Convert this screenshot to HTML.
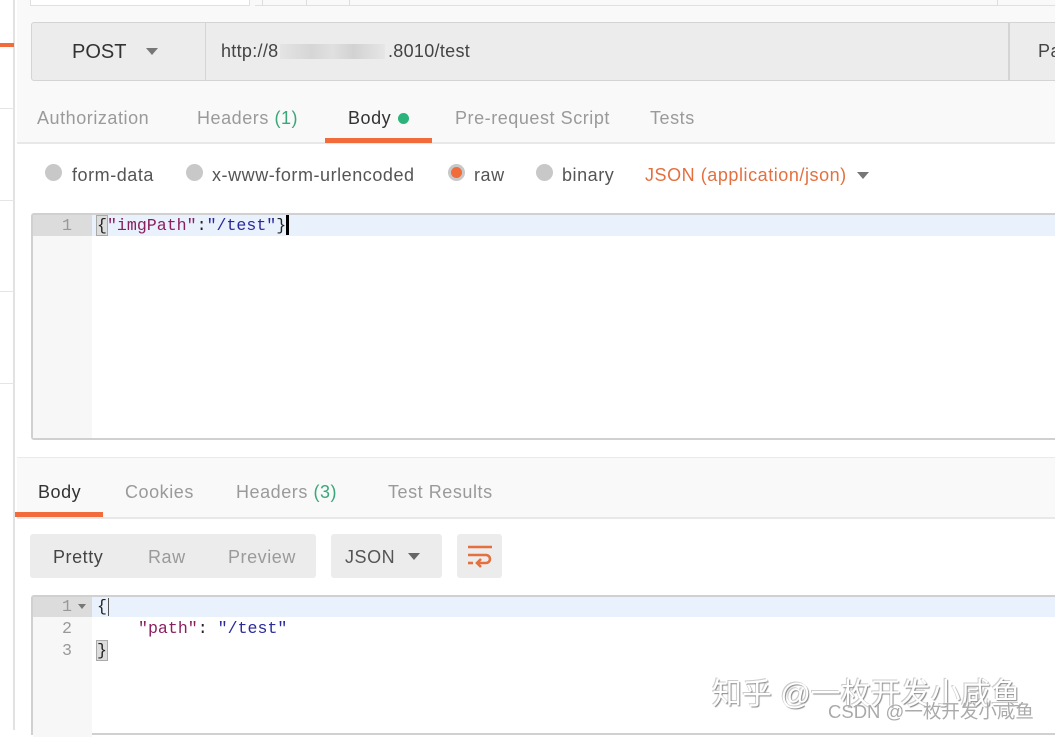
<!DOCTYPE html>
<html><head><meta charset="utf-8"><style>
*{margin:0;padding:0;box-sizing:border-box}
body{width:1055px;height:730px;overflow:hidden;background:#fff;font-family:"Liberation Sans","Noto Sans CJK SC",sans-serif;position:relative;font-size:18px;letter-spacing:0.55px}
.a{position:absolute}
.mono{font-family:"Liberation Mono","DejaVu Sans Mono",monospace;font-size:16.6px;letter-spacing:0}
.g{color:#9a9a9a}
.gr{color:#3aa77a}
.dot{position:absolute;width:17px;height:17px;border-radius:50%;background:#c8c8c8}
</style></head><body>
<div class="a" style="left:0;top:0;width:15px;height:730px;background:#fff;border-right:2px solid #e2e2e2"></div>
<div class="a" style="left:0;top:43px;width:14px;height:4px;background:#f26b3a"></div>
<div class="a" style="left:0;top:108px;width:14px;height:1px;background:#e5e5e5"></div>
<div class="a" style="left:0;top:200px;width:14px;height:1px;background:#e5e5e5"></div>
<div class="a" style="left:0;top:291px;width:14px;height:1px;background:#e5e5e5"></div>
<div class="a" style="left:0;top:383px;width:14px;height:1px;background:#e5e5e5"></div>
<div class="a" style="left:17px;top:0;width:1038px;height:22px;background:#f9f9f9"></div>
<div class="a" style="left:30px;top:0;width:220px;height:6px;background:#fff;border:1px solid #e0e0e0;border-top:none"></div>
<div class="a" style="left:255px;top:0;width:800px;height:6px;border-bottom:1px solid #e0e0e0"></div>
<div class="a" style="left:262px;top:0;width:1px;height:6px;background:#ddd"></div>
<div class="a" style="left:306px;top:0;width:1px;height:6px;background:#ddd"></div>
<div class="a" style="left:349px;top:0;width:1px;height:6px;background:#ddd"></div>
<div class="a" style="left:997px;top:0;width:1px;height:6px;background:#ddd"></div>
<div class="a" style="left:17px;top:6px;width:1038px;height:75px;background:#f9f9f9"></div>
<div class="a" style="left:31px;top:22px;width:1030px;height:59px;background:#ececec;border:1px solid #d4d4d4;border-radius:3px"></div>
<div class="a" style="left:205px;top:23px;width:1px;height:57px;background:#d4d4d4"></div>
<div class="a" style="left:1008px;top:23px;width:2px;height:57px;background:#d4d4d4"></div>
<div class="a" style="left:72px;top:41px;font-size:20px;color:#333;letter-spacing:0">POST</div>
<div class="a" style="left:146px;top:48px;width:0;height:0;border-left:6px solid transparent;border-right:6px solid transparent;border-top:7px solid #777"></div>
<div class="a" style="left:221px;top:41px;font-size:18px;color:#444;letter-spacing:0.3px">http://8</div>
<div class="a" style="left:280px;top:44px;width:105px;height:15px;background:linear-gradient(90deg,#e4e4e4,#d6d6d6 30%,#e0e0e0 50%,#d2d2d2 70%,#e6e6e6)"></div>
<div class="a" style="left:388px;top:41px;font-size:18px;color:#444;letter-spacing:0.3px">.8010/test</div>
<div class="a" style="left:1038px;top:41px;font-size:18px;color:#444">Pa</div>
<div class="a" style="left:17px;top:81px;width:1038px;height:63px;background:#f9f9f9;border-bottom:2px solid #e8e8e8"></div>
<div class="a g" style="left:37px;top:108px">Authorization</div>
<div class="a g" style="left:197px;top:108px">Headers <span class="gr">(1)</span></div>
<div class="a" style="left:348px;top:108px;color:#333">Body</div>
<div class="a" style="left:398px;top:113px;width:11px;height:11px;border-radius:50%;background:#2bb37b"></div>
<div class="a g" style="left:455px;top:108px">Pre-request Script</div>
<div class="a g" style="left:650px;top:108px">Tests</div>
<div class="a" style="left:325px;top:138px;width:107px;height:5px;background:#f26b3a"></div>
<div class="dot" style="left:45px;top:164px"></div>
<div class="a" style="left:72px;top:165px;color:#555">form-data</div>
<div class="dot" style="left:186px;top:164px"></div>
<div class="a" style="left:212px;top:165px;color:#555">x-www-form-urlencoded</div>
<div class="dot" style="left:448px;top:164px;background:#f26b3a;border:3px solid #c8c8c8"></div>
<div class="a" style="left:474px;top:165px;color:#555">raw</div>
<div class="dot" style="left:536px;top:164px"></div>
<div class="a" style="left:562px;top:165px;color:#555">binary</div>
<div class="a" style="left:645px;top:165px;color:#e4703f">JSON (application/json)</div>
<div class="a" style="left:857px;top:172px;width:0;height:0;border-left:6px solid transparent;border-right:6px solid transparent;border-top:7px solid #777"></div>
<div class="a" style="left:31px;top:213px;width:1030px;height:227px;border:2px solid #d0d0d0;border-right:none;border-radius:3px 0 0 3px;background:#fff"></div>
<div class="a" style="left:33px;top:215px;width:59px;height:223px;background:#f7f7f7"></div>
<div class="a" style="left:33px;top:215px;width:59px;height:21px;background:#dcdcdc"></div>
<div class="a" style="left:92px;top:215px;width:963px;height:21px;background:#e8f1fc"></div>
<div class="a mono" style="left:62px;top:216px;color:#999">1</div>
<div class="a mono" style="left:97px;top:216px;color:#222"><span style="outline:1px solid #aaa;background:#ddd">{</span><span style="color:#8a1f5f">"imgPath"</span>:<span style="color:#2a2a9a">"/test"</span>}</div>
<div class="a" style="left:286px;top:215px;width:3px;height:20px;background:#000"></div>
<div class="a" style="left:17px;top:457px;width:1038px;height:62px;background:#f9f9f9;border-top:1px solid #eaeaea;border-bottom:2px solid #e8e8e8"></div>
<div class="a" style="left:38px;top:482px;color:#333">Body</div>
<div class="a g" style="left:125px;top:482px">Cookies</div>
<div class="a g" style="left:236px;top:482px">Headers <span class="gr">(3)</span></div>
<div class="a g" style="left:388px;top:482px">Test Results</div>
<div class="a" style="left:15px;top:512px;width:88px;height:5px;background:#f26b3a"></div>
<div class="a" style="left:30px;top:534px;width:286px;height:44px;background:#ececec;border-radius:3px"></div>
<div class="a" style="left:53px;top:547px;color:#444">Pretty</div>
<div class="a g" style="left:148px;top:547px">Raw</div>
<div class="a g" style="left:228px;top:547px">Preview</div>
<div class="a" style="left:331px;top:534px;width:111px;height:44px;background:#ececec;border-radius:3px"></div>
<div class="a" style="left:345px;top:547px;color:#555">JSON</div>
<div class="a" style="left:408px;top:553px;width:0;height:0;border-left:6px solid transparent;border-right:6px solid transparent;border-top:7px solid #666"></div>
<div class="a" style="left:457px;top:534px;width:45px;height:44px;background:#ececec;border-radius:3px"></div>
<svg class="a" style="left:466px;top:544px" width="28" height="24" viewBox="0 0 28 24"><g stroke="#e4703f" stroke-width="2.6" fill="none"><path d="M2 3H26"/><path d="M2 11H20a4 4 0 0 1 0 8H12"/><path d="M15 15l-4 4 4 4"/><path d="M2 19H7"/></g></svg>
<div class="a" style="left:31px;top:595px;width:1030px;height:140px;border:2px solid #d0d0d0;border-right:none;border-radius:3px 0 0 0;background:#fff"></div>
<div class="a" style="left:33px;top:597px;width:59px;height:140px;background:#f7f7f7"></div>
<div class="a" style="left:33px;top:597px;width:59px;height:20px;background:#dcdcdc"></div>
<div class="a" style="left:92px;top:597px;width:963px;height:20px;background:#e8f1fc"></div>
<div class="a mono" style="left:62px;top:597px;color:#999">1</div>
<div class="a" style="left:78px;top:604px;width:0;height:0;border-left:4px solid transparent;border-right:4px solid transparent;border-top:5px solid #777"></div>
<div class="a mono" style="left:62px;top:619px;color:#999">2</div>
<div class="a mono" style="left:62px;top:641px;color:#999">3</div>
<div class="a mono" style="left:97px;top:597px;color:#222">{</div>
<div class="a" style="left:108px;top:598px;width:1px;height:18px;background:#555"></div>
<div class="a mono" style="left:138px;top:619px;color:#222"><span style="color:#8a1f5f">"path"</span>: <span style="color:#2a2a9a">"/test"</span></div>
<div class="a mono" style="left:97px;top:641px;color:#222"><span style="outline:1px solid #aaa;background:#ddd">}</span></div>
<div class="a" style="left:712px;top:669px;font-size:30px;letter-spacing:0;color:#fff;text-shadow:1px 1px 1px #888,-1px -1px 0 #ccc">知乎 @一枚开发小咸鱼</div>
<div class="a" style="left:828px;top:698px;font-size:18.5px;letter-spacing:0;color:#aaa;text-shadow:0 0 1px #fff">CSDN @一枚开发小咸鱼</div>
</body></html>
